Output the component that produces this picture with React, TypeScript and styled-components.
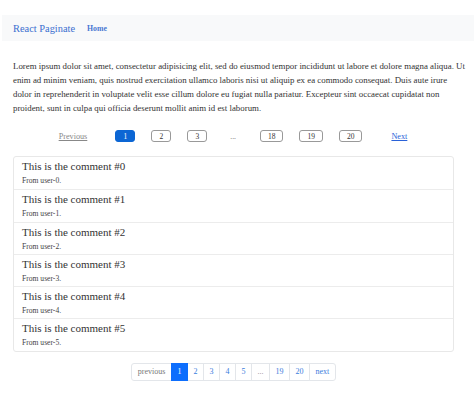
import React from 'react';
import styled, { createGlobalStyle, css } from 'styled-components';

const GlobalStyle = createGlobalStyle`
  html, body {
    margin: 0;
    padding: 0;
    background: #ffffff;
  }
  body {
    font-family: 'Liberation Serif', 'DejaVu Serif', serif;
    color: #212529;
  }
`;

const comments = [0, 1, 2, 3, 4, 5];

const topPages = ['1', '2', '3', '...', '18', '19', '20'];
const bottomPages = ['1', '2', '3', '4', '5', '...', '19', '20'];

const App: React.FC = () => {
  return (
    <>
      <GlobalStyle />
      <Page>
        <Navbar>
          <Brand>React Paginate</Brand>
          <NavLink>Home</NavLink>
        </Navbar>
        <Main>
          <Intro>
            Lorem ipsum dolor sit amet, consectetur adipisicing elit, sed do
            eiusmod tempor incididunt ut labore et dolore magna aliqua. Ut enim
            ad minim veniam, quis nostrud exercitation ullamco laboris nisi ut
            aliquip ex ea commodo consequat. Duis aute irure dolor in
            reprehenderit in voluptate velit esse cillum dolore eu fugiat nulla
            pariatur. Excepteur sint occaecat cupidatat non proident, sunt in
            culpa qui officia deserunt mollit anim id est laborum.
          </Intro>

          <OutlinePager>
            <PagerText>Previous</PagerText>
            {topPages.map((p) =>
              p === '...' ? (
                <Ellipsis key="dots">...</Ellipsis>
              ) : (
                <PageBox key={p} active={p === '1'}>
                  {p}
                </PageBox>
              )
            )}
            <PagerText next>Next</PagerText>
          </OutlinePager>

          <CommentList>
            {comments.map((n) => (
              <CommentItem key={n}>
                <CommentTitle>This is the comment #{n}</CommentTitle>
                <CommentFrom>From user-{n}.</CommentFrom>
              </CommentItem>
            ))}
          </CommentList>

          <BootstrapPager>
            <PageCell>previous</PageCell>
            {bottomPages.map((p, i) => (
              <PageCell key={`${p}_${i}`} active={p === '1'} muted={p === '...'}>
                {p}
              </PageCell>
            ))}
            <PageCell>next</PageCell>
          </BootstrapPager>
        </Main>
      </Page>
    </>
  );
};

const Page = styled.div`
  padding-top: 15px;
`;

const Navbar = styled.nav`
  display: flex;
  align-items: center;
  height: 26px;
  margin-left: 2px;
  padding-left: 11px;
  background: #f8f9fa;
`;

const Brand = styled.span`
  font-size: 10.4px;
  color: #3b6fd0;
  margin-right: 12px;
`;

const NavLink = styled.span`
  font-size: 7.8px;
  font-weight: bold;
  color: #4a78d2;
`;

const Main = styled.main`
  padding: 0 13px;
`;

const Intro = styled.p`
  margin: 18px 0 0;
  font-size: 8.85px;
  line-height: 14px;
  color: #333;
  width: 452px;
`;

const OutlinePager = styled.div`
  display: flex;
  align-items: center;
  justify-content: center;
  height: 12px;
  margin: 15px 0 0;
  padding-right: 8px;
`;

const PagerText = styled.span<{ next?: boolean }>`
  font-size: 8.2px;
  text-decoration: underline;
  color: #888;
  margin-right: 28px;

  ${({ next }) =>
    next &&
    css`
      color: #2a62d8;
      margin-right: 0;
      margin-left: 13px;
    `}
`;

const PageBox = styled.span<{ active?: boolean }>`
  display: flex;
  align-items: center;
  justify-content: center;
  box-sizing: border-box;
  min-width: 20px;
  height: 12px;
  padding: 0 7px;
  margin-right: 16px;
  border: 1px solid #999;
  border-radius: 3px;
  font-size: 7.5px;
  color: #333;

  ${({ active }) =>
    active &&
    css`
      background: #0c66d4;
      border-color: #0c66d4;
      color: #fff;
    `}
`;

const Ellipsis = styled.span`
  font-size: 7.5px;
  color: #555;
  margin: 0 24px 0 7px;
`;

const CommentList = styled.ul`
  list-style: none;
  margin: 14px 0 0;
  padding: 0;
  width: 439px;
  border: 1px solid #e8e8e8;
  border-radius: 3px;
`;

const CommentItem = styled.li`
  box-sizing: border-box;
  height: 32.3px;
  padding: 3px 8px 0;
  border-top: 1px solid #ececec;

  &:first-child {
    border-top: none;
  }
`;

const CommentTitle = styled.div`
  font-size: 11px;
  line-height: 13px;
  color: #333;
`;

const CommentFrom = styled.div`
  margin-top: 3px;
  font-size: 7.6px;
  line-height: 9px;
  color: #444;
`;

const BootstrapPager = styled.div`
  display: flex;
  justify-content: center;
  margin: 11px 0 0;
  padding-right: 6px;
`;

const PageCell = styled.span<{ active?: boolean; muted?: boolean }>`
  display: flex;
  align-items: center;
  justify-content: center;
  box-sizing: border-box;
  height: 18px;
  padding: 0 5.5px;
  font-size: 8px;
  color: #3b7ddd;
  background: #fff;
  border: 1px solid #e3e6ea;
  margin-left: -1px;

  &:first-child {
    color: #777;
    border-radius: 3px 0 0 3px;
  }

  &:last-child {
    border-radius: 0 3px 3px 0;
  }

  ${({ muted }) =>
    muted &&
    css`
      color: #888;
    `}

  ${({ active }) =>
    active &&
    css`
      background: #0d6efd;
      border-color: #0d6efd;
      color: #fff;
      position: relative;
      z-index: 1;
    `}
`;

export default App;
